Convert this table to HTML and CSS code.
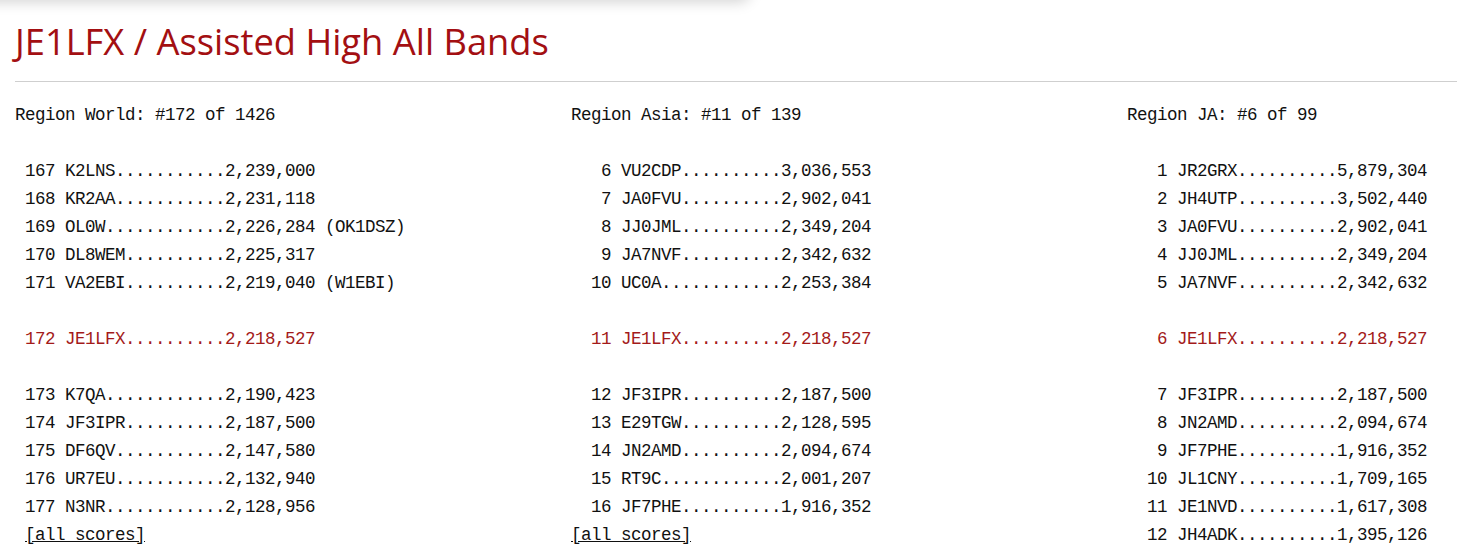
FILE: index.html
```html
<!DOCTYPE html>
<html>
<head>
<meta charset="utf-8">
<link rel="stylesheet" href="styles.css">
</head>
<body>
<div class="topshadow"></div>
<main class="page">
<h1 class="title">JE1LFX / Assisted High All Bands</h1>
<hr class="rule">
<div class="regions">
<pre class="region">Region World: #172 of 1426

 167 K2LNS...........2,239,000
 168 KR2AA...........2,231,118
 169 OL0W............2,226,284 (OK1DSZ)
 170 DL8WEM..........2,225,317
 171 VA2EBI..........2,219,040 (W1EBI)

<span class="me"> 172 JE1LFX..........2,218,527</span>

 173 K7QA............2,190,423
 174 JF3IPR..........2,187,500
 175 DF6QV...........2,147,580
 176 UR7EU...........2,132,940
 177 N3NR............2,128,956
<a class="more indent" href="#">[all scores]</a></pre>
<pre class="region">Region Asia: #11 of 139

   6 VU2CDP..........3,036,553
   7 JA0FVU..........2,902,041
   8 JJ0JML..........2,349,204
   9 JA7NVF..........2,342,632
  10 UC0A............2,253,384

<span class="me">  11 JE1LFX..........2,218,527</span>

  12 JF3IPR..........2,187,500
  13 E29TGW..........2,128,595
  14 JN2AMD..........2,094,674
  15 RT9C............2,001,207
  16 JF7PHE..........1,916,352
<a class="more" href="#">[all scores]</a></pre>
<pre class="region">Region JA: #6 of 99

   1 JR2GRX..........5,879,304
   2 JH4UTP..........3,502,440
   3 JA0FVU..........2,902,041
   4 JJ0JML..........2,349,204
   5 JA7NVF..........2,342,632

<span class="me">   6 JE1LFX..........2,218,527</span>

   7 JF3IPR..........2,187,500
   8 JN2AMD..........2,094,674
   9 JF7PHE..........1,916,352
  10 JL1CNY..........1,709,165
  11 JE1NVD..........1,617,308
  12 JH4ADK..........1,395,126</pre>
</div>
</main>
</body>
</html>
```
FILE: styles.css
```css
html, body {
  margin: 0;
  padding: 0;
  background: #fff;
  overflow: hidden;
}
body {
  position: relative;
  width: 1457px;
  height: 555px;
}
.topshadow {
  position: absolute;
  top: -60px;
  left: -20px;
  width: 770px;
  height: 60px;
  border-radius: 10px;
  background: #fff;
  box-shadow: 0 2px 14px rgba(0, 0, 0, 0.18);
}
.page {
  padding-left: 15px;
}
.title {
  margin: 19px 0 0;
  font-family: "Open Sans", "Noto Sans", sans-serif;
  font-weight: 400;
  font-size: 36.3px;
  line-height: 44px;
  color: #a30f12;
}
.rule {
  margin: 18px 0 0;
  border: 0;
  border-top: 1px solid #cfcfcf;
  height: 0;
}
.regions {
  display: grid;
  grid-template-columns: 556px 556px 1fr;
  margin-top: 19px;
}
.region {
  margin: 0;
  font-family: "Liberation Mono", "DejaVu Sans Mono", monospace;
  font-size: 17.5px;
  letter-spacing: -0.5px;
  line-height: 28px;
  color: #111;
}
.me {
  color: #a31a1a;
}
.more {
  color: #111;
  text-decoration: underline;
}
.indent {
  margin-left: 10px;
}
```
